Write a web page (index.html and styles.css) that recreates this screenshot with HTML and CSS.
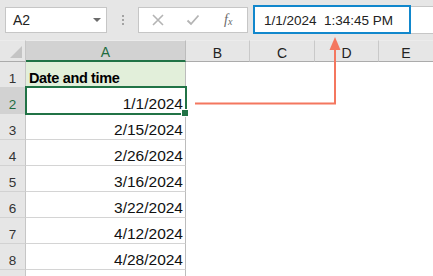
FILE: index.html
```html
<!DOCTYPE html>
<html>
<head>
<meta charset="utf-8">
<link rel="stylesheet" href="styles.css">
</head>
<body>
<div class="app">
  <div class="toolbar">
    <div class="namebox"><span class="nb-text">A2</span><span class="nb-arrow"></span></div>
    <div class="grip"><i></i><i></i><i></i></div>
    <div class="fbtns">
      <svg class="ico" width="14" height="14" viewBox="0 0 14 14"><path d="M2 2L12 12M12 2L2 12" stroke="#b4b4b4" stroke-width="1.6" fill="none"/></svg>
      <svg class="ico" width="14" height="14" viewBox="0 0 14 14"><path d="M1.5 7.5L5 11L12.5 2.5" stroke="#b4b4b4" stroke-width="1.8" fill="none"/></svg>
      <span class="fx">f<sub>x</sub></span>
    </div>
    <div class="finput"><div class="fhl">1/1/2024&nbsp; 1:34:45 PM</div></div>
  </div>
  <div class="sheet">
    <div class="corner"><span class="tri"></span></div>
    <div class="ch ch-sel">A</div>
    <div class="ch">B</div>
    <div class="ch">C</div>
    <div class="ch">D</div>
    <div class="ch ch-last">E</div>

    <div class="rh">1</div><div class="ca title">Date and time</div><div class="cx"></div><div class="cx"></div><div class="cx"></div><div class="cx"></div>
    <div class="rh rh-sel">2</div><div class="ca sel">1/1/2024</div><div class="cx"></div><div class="cx"></div><div class="cx"></div><div class="cx"></div>
    <div class="rh">3</div><div class="ca">2/15/2024</div><div class="cx"></div><div class="cx"></div><div class="cx"></div><div class="cx"></div>
    <div class="rh">4</div><div class="ca">2/26/2024</div><div class="cx"></div><div class="cx"></div><div class="cx"></div><div class="cx"></div>
    <div class="rh">5</div><div class="ca">3/16/2024</div><div class="cx"></div><div class="cx"></div><div class="cx"></div><div class="cx"></div>
    <div class="rh">6</div><div class="ca">3/22/2024</div><div class="cx"></div><div class="cx"></div><div class="cx"></div><div class="cx"></div>
    <div class="rh">7</div><div class="ca">4/12/2024</div><div class="cx"></div><div class="cx"></div><div class="cx"></div><div class="cx"></div>
    <div class="rh">8</div><div class="ca">4/28/2024</div><div class="cx"></div><div class="cx"></div><div class="cx"></div><div class="cx"></div>
    <div class="rh"></div><div class="ca"></div><div class="cx"></div><div class="cx"></div><div class="cx"></div><div class="cx"></div>
  </div>
  <svg class="callout" width="433" height="276" viewBox="0 0 433 276">
    <polyline points="195,103.5 335,103.5 335,48" fill="none" stroke="#f4775f" stroke-width="2"/>
    <polygon points="335,37 329.5,50 340.5,50" fill="#f4775f"/>
  </svg>
</div>
</body>
</html>
```
FILE: styles.css
```css
* { box-sizing: border-box; }
html, body { margin: 0; padding: 0; background: #fff; }
body { font-family: "Liberation Sans", Arial, sans-serif; color: #222; overflow: hidden; }
.app { position: relative; width: 433px; height: 276px; overflow: hidden; }

.toolbar {
  height: 40px;
  background: #e6e6e6;
  display: flex;
  align-items: flex-start;
  padding-top: 7px;
  padding-left: 5px;
}
.namebox {
  width: 102px; height: 26px;
  background: #fff;
  border: 1px solid #c6c6c6;
  display: flex; align-items: center; justify-content: space-between;
  padding: 0 5px 0 7px;
}
.nb-text { font-size: 14px; color: #222; }
.nb-arrow {
  width: 0; height: 0;
  border-left: 4px solid transparent; border-right: 4px solid transparent;
  border-top: 4px solid #6b6b6b;
}
.grip { width: 31px; display: flex; flex-direction: column; align-items: center; gap: 2px; padding-top: 8px; }
.grip i { display: block; width: 2px; height: 2px; background: #a3a3a3; }
.fbtns {
  width: 110px; height: 26px;
  background: #fff;
  border: 1px solid #c6c6c6;
  display: flex; align-items: center;
  padding-left: 12px;
  gap: 21px;
}
.fx { font-family: "Liberation Serif", serif; font-style: italic; color: #6a6a6a; font-size: 14px; margin-left: 3px; }
.fx sub { font-size: 10px; vertical-align: -1px; }
.finput {
  flex: 1;
  margin-left: 5px;
  margin-top: -1px;
  height: 28px;
  background: #fff;
  border-top: 1px solid #c6c6c6;
  border-bottom: 1px solid #c6c6c6;
  border-left: 1px solid #c6c6c6;
}
.fhl {
  width: 158px; height: 29px;
  margin: -2px 0 0 -1px;
  border: 2px solid #1187cc;
  font-size: 13.5px;
  color: #222;
  display: flex; align-items: center;
  padding-left: 9px;
  padding-top: 1px;
  white-space: nowrap;
}

.sheet {
  display: grid;
  grid-template-columns: 26px 160px 64px 65px 64px 1fr;
  grid-template-rows: 22px repeat(9, 26px);
}
.corner {
  background: #e6e6e6;
  border-right: 1px solid #c6c6c6;
  border-bottom: 1px solid #ababab;
  border-top: 1px solid #ececec;
  position: relative;
}
.tri {
  position: absolute; right: 3px; bottom: 3px;
  width: 0; height: 0;
  border-left: 12px solid transparent;
  border-bottom: 12px solid #c4c4c4;
}
.ch {
  background: #e6e6e6;
  border-right: 1px solid #c9c9c9;
  border-bottom: 1px solid #ababab;
  border-top: 1px solid #ececec;
  font-size: 14px;
  color: #222;
  display: flex; align-items: center; justify-content: center;
  padding-top: 3px;
}
.ch-sel { background: #d2d2d2; color: #1e6b40; border-bottom: 2px solid #217346; border-right-color: #bcbcbc; }
.ch-last { border-right: none; }
.rh {
  background: #e6e6e6;
  border-right: 1px solid #c6c6c6;
  border-bottom: 1px solid #d2d2d2;
  font-size: 13.5px;
  color: #333;
  display: flex; align-items: flex-end; justify-content: center;
  padding-bottom: 1px;
}
.rh-sel { background: #d2d2d2; color: #1e6b40; }
.ca {
  border-right: 1px solid #bcbcbc;
  border-bottom: 1px solid #d4d4d4;
  font-size: 15.5px;
  color: #111;
  display: flex; align-items: flex-end; justify-content: flex-end;
  padding: 0 2px 0 3px;
  white-space: nowrap;
}
.ca.title {
  background: #e2efda;
  justify-content: flex-start;
  font-weight: bold;
  font-size: 14.5px;
  letter-spacing: -0.35px;
  color: #000;
  padding-bottom: 1px;
}
.ca.sel { position: relative; }
.ca.sel::before {
  content: "";
  position: absolute;
  left: -1px; top: -2px; right: -2px; bottom: -2px;
  border: 2px solid #217346;
}
.ca.sel::after {
  content: "";
  position: absolute;
  right: -4px; bottom: -4px;
  width: 6px; height: 6px;
  background: #217346;
  border: 1px solid #fff;
}
.cx { background: #fff; }
.callout { position: absolute; left: 0; top: 0; pointer-events: none; }
```
